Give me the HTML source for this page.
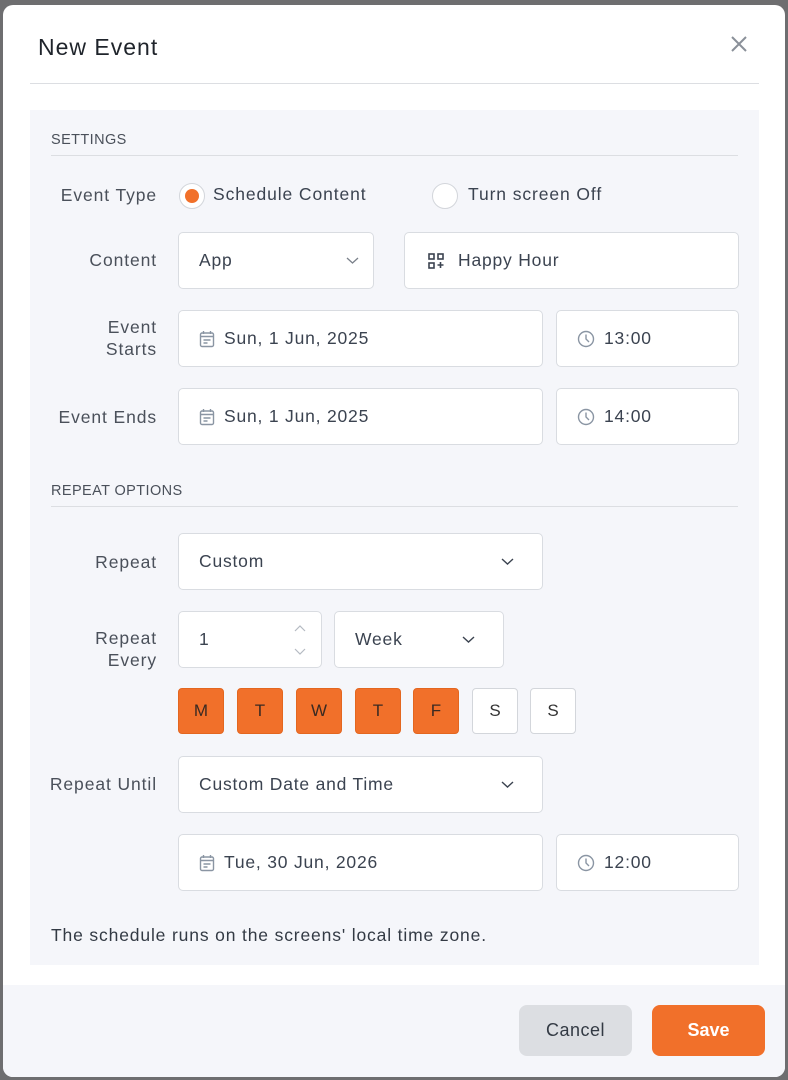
<!DOCTYPE html>
<html><head><style>
*{box-sizing:border-box;margin:0;padding:0}
body{width:788px;height:1080px;background:#6e6e70;font-family:"Liberation Sans",sans-serif;position:relative;overflow:hidden;color:#333a44}
.modal{position:absolute;left:3px;top:5px;width:782px;height:1072px;background:#fff;border-radius:10px;overflow:hidden}
.a{position:absolute}
.title{left:35px;top:29px;font-size:23px;color:#1f242b;letter-spacing:1px}
.hr{height:1px;background:#dcdee2}
.panel{left:27px;top:105px;width:729px;height:855px;background:#f5f6fa}
.sec{font-size:14.5px;color:#4a505a;letter-spacing:.4px}
.lbl{font-size:17.5px;color:#4a505a;text-align:right;width:140px;left:14px;line-height:22px;letter-spacing:.9px}
.f{background:#fff;border:1px solid #d9dce1;border-radius:5px;font-size:17.5px;color:#3b4350;display:flex;align-items:center;padding-left:20px;letter-spacing:.8px}
.chev{position:absolute;right:14px;top:50%;margin-top:-5px}
.ic{margin-right:9px;flex:none}
.d{border-radius:4px;font-size:17px;display:flex;align-items:center;justify-content:center;height:46px;width:46px;top:683px}
.on{background:#f1702a;border:1px solid #e3661f;color:#3a2a22}
.off{background:#fff;border:1px solid #d3d6db;color:#333}
.footer{left:0;top:980px;width:782px;height:92px;background:#f5f6fa}
.btn{border-radius:8px;font-size:18px;display:flex;align-items:center;justify-content:center;height:51px;top:1000px}
</style></head><body>
<div class="modal">
<div class="a title">New Event</div>
<svg class="a" style="left:728px;top:31px" width="16" height="16" viewBox="0 0 16 16"><path d="M1 1L15 15M15 1L1 15" stroke="#8a9099" stroke-width="2"/></svg>
<div class="a hr" style="left:27px;top:78px;width:729px"></div>
<div class="a panel"></div>
<div class="a sec" style="left:48px;top:127px">SETTINGS</div>
<div class="a hr" style="left:48px;top:150px;width:687px"></div>

<div class="a lbl" style="top:179px">Event Type</div>
<div class="a" style="left:176px;top:178px;width:26px;height:26px;border-radius:50%;background:#fff;border:1px solid #d3d6db"></div>
<div class="a" style="left:182px;top:184px;width:14px;height:14px;border-radius:50%;background:#f1702a"></div>
<div class="a" style="left:210px;top:179px;font-size:17.5px;color:#3b4350;letter-spacing:.9px">Schedule Content</div>
<div class="a" style="left:429px;top:178px;width:26px;height:26px;border-radius:50%;background:#fff;border:1px solid #d3d6db"></div>
<div class="a" style="left:465px;top:179px;font-size:17.5px;color:#3b4350;letter-spacing:.9px">Turn screen Off</div>

<div class="a lbl" style="top:244px">Content</div>
<div class="a f" style="left:175px;top:227px;width:196px;height:57px">App<svg class="chev" width="13" height="9" viewBox="0 0 13 9"><path d="M1 2l5.5 5 5.5-5" fill="none" stroke="#7a808a" stroke-width="1.3"/></svg></div>
<div class="a f" style="left:401px;top:227px;width:335px;height:57px;padding-left:22px"><svg class="ic" style="margin-right:13px" width="18" height="18" viewBox="0 0 18 18" fill="none" stroke="#3b4350" stroke-width="1.6"><rect x="2" y="2" width="5" height="5"/><rect x="11" y="2" width="5" height="5"/><rect x="2" y="11" width="5" height="5"/><path d="M13.5 10v6M10.5 13h6"/></svg>Happy Hour</div>

<div class="a lbl" style="top:311px">Event<br>Starts</div>
<div class="a f cal" style="left:175px;top:305px;width:365px;height:57px"></div>
<div class="a f" style="left:553px;top:305px;width:183px;height:57px"></div>
<div class="a lbl" style="top:401px">Event Ends</div>
<div class="a f" style="left:175px;top:383px;width:365px;height:57px"></div>
<div class="a f" style="left:553px;top:383px;width:183px;height:57px"></div>

<div class="a sec" style="left:48px;top:478px">REPEAT OPTIONS</div>
<div class="a hr" style="left:48px;top:501px;width:687px"></div>

<div class="a lbl" style="top:546px">Repeat</div>
<div class="a f" style="left:175px;top:528px;width:365px;height:57px">Custom<svg class="chev" style="right:28px" width="13" height="9" viewBox="0 0 13 9"><path d="M1 2l5.5 5 5.5-5" fill="none" stroke="#3b4350" stroke-width="1.4"/></svg></div>

<div class="a lbl" style="top:622px">Repeat<br>Every</div>
<div class="a f" style="left:175px;top:606px;width:144px;height:57px">1
<svg class="a" style="right:14px;top:11px" width="14" height="34" viewBox="0 0 14 34"><path d="M2 8l5-5 5 5M2 26l5 5 5-5" fill="none" stroke="#b5bac2" stroke-width="1.2"/></svg></div>
<div class="a f" style="left:331px;top:606px;width:170px;height:57px">Week<svg class="chev" style="right:28px" width="13" height="9" viewBox="0 0 13 9"><path d="M1 2l5.5 5 5.5-5" fill="none" stroke="#3b4350" stroke-width="1.4"/></svg></div>

<div class="a d on" style="left:175px">M</div>
<div class="a d on" style="left:234px">T</div>
<div class="a d on" style="left:293px">W</div>
<div class="a d on" style="left:352px">T</div>
<div class="a d on" style="left:410px">F</div>
<div class="a d off" style="left:469px">S</div>
<div class="a d off" style="left:527px">S</div>

<div class="a lbl" style="top:768px">Repeat Until</div>
<div class="a f" style="left:175px;top:751px;width:365px;height:57px">Custom Date and Time<svg class="chev" style="right:28px" width="13" height="9" viewBox="0 0 13 9"><path d="M1 2l5.5 5 5.5-5" fill="none" stroke="#3b4350" stroke-width="1.4"/></svg></div>
<div class="a f" style="left:175px;top:829px;width:365px;height:57px"></div>
<div class="a f" style="left:553px;top:829px;width:183px;height:57px"></div>

<div class="a" style="left:48px;top:920px;font-size:17.5px;color:#333a44;letter-spacing:.85px">The schedule runs on the screens' local time zone.</div>

<div class="a footer"></div>
<div class="a btn" style="left:516px;width:113px;background:#dcdee2;color:#333a44;letter-spacing:.5px">Cancel</div>
<div class="a btn" style="left:649px;width:113px;background:#f1702a;color:#fff;font-weight:bold">Save</div>
</div>
<script>
var cal='<svg class="ic" width="16" height="18" viewBox="0 0 16 18" fill="none" stroke="#8a95a3" stroke-width="1.4"><rect x="1.5" y="3" width="13" height="13.5" rx="1.5"/><path d="M4.5 1v3M11.5 1v3M1.5 6.5h13M4.5 10h7M4.5 13h4"/></svg>';
var clk='<svg class="ic" width="18" height="18" viewBox="0 0 18 18" fill="none" stroke="#8a95a3" stroke-width="1.4"><circle cx="9" cy="9" r="7.5"/><path d="M9 4.5V9l3 3"/></svg>';
var fs=document.querySelectorAll('.f');
var map=[[3,cal,'Sun, 1 Jun, 2025'],[4,clk,'13:00'],[5,cal,'Sun, 1 Jun, 2025'],[6,clk,'14:00'],[11,cal,'Tue, 30 Jun, 2026'],[12,clk,'12:00']];
map.forEach(function(m){fs[m[0]-1].innerHTML=m[1]+m[2];});
</script>
</body></html>
